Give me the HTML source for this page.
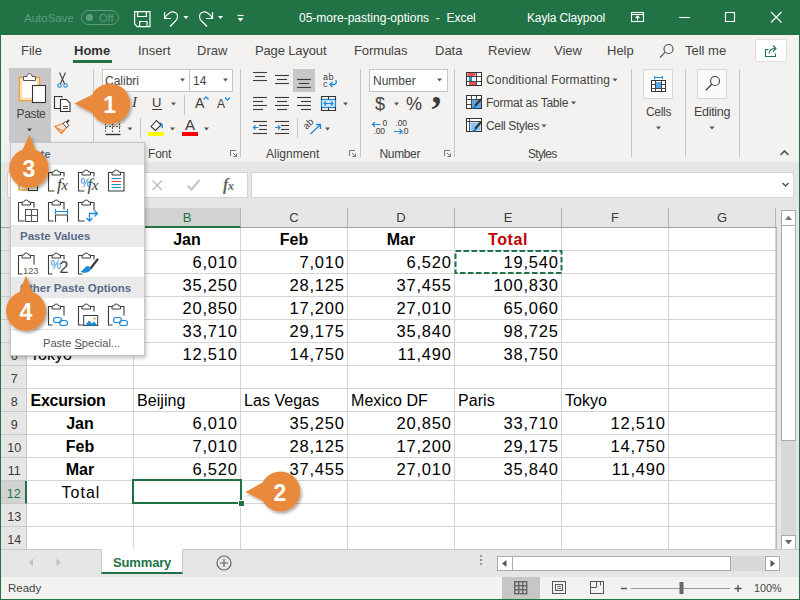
<!DOCTYPE html>
<html>
<head>
<meta charset="utf-8">
<title>Excel</title>
<style>
html,body{margin:0;padding:0;}
body{width:800px;height:600px;overflow:hidden;position:relative;background:#fff;font-family:"Liberation Sans",sans-serif;font-size:12px;color:#444;}
.abs,#app *{position:absolute;box-sizing:border-box;}
#app{position:absolute;left:0;top:0;width:800px;height:600px;overflow:hidden;}
.t{white-space:nowrap;line-height:1;}
#title{left:0;top:0;width:800px;height:35px;background:#217346;}
#title .t{color:#fff;font-size:12px;}
#tabs{left:1px;top:35px;width:798px;height:30px;background:#f3f2f1;}
#tabs .t{font-size:13px;color:#444;top:9px;}
#ribbon{left:0px;top:65px;width:800px;height:97px;background:#f3f2f1;box-shadow:0 1px 2px rgba(0,0,0,0.18);}
.sep{width:1px;background:#c8c6c4;top:69px;height:88px;}
.ssep{width:1px;background:#c8c6c4;height:20px;}
.ibox{top:69px;width:30px;height:30px;background:#fafafa;border:1px solid #d8d8d8;}
.gl{font-size:12px;color:#444;top:147.500px;}
.lbl{font-size:12px;color:#444;}
.combo{background:#fff;border:1px solid #c6c6c6;height:23px;top:69px;}
#below{left:1px;top:162px;width:798px;height:46px;background:#e6e6e6;}
.fbox{background:#fff;border:1px solid #d4d4d4;top:10px;height:26px;}
#grid{left:1px;top:208px;width:776px;height:341px;background:#fff;overflow:hidden;}
.ch{top:0;height:19px;background:#e6e6e6;border-right:1px solid #b4b4b4;color:#3a3a3a;font-size:13px;text-align:center;line-height:20px;}
.rh{left:0;width:26px;background:#e6e6e6;border-bottom:1px solid #c9c9c9;color:#3a3a3a;font-size:12.500px;text-align:center;}
.vl{top:20px;width:1px;height:330px;background:#d4d4d4;}
.hl{left:26px;height:1px;width:750px;background:#d4d4d4;}
.c{font-size:16.5px;color:#000;white-space:nowrap;line-height:1;letter-spacing:0.8px;margin-right:-0.8px;}
.b{font-weight:bold;font-size:16px;letter-spacing:0px;margin-top:1px;margin-right:0;}
.tx{font-size:16px;letter-spacing:0.05px;margin-top:1px;margin-left:1px;margin-right:0;}
.dg{font-size:8.500px;color:#3b3b3b;letter-spacing:-0.2px;}
.mb{font-size:11.5px;font-weight:bold;color:#5a6a8c;}
#sheetbar{left:1px;top:549px;width:798px;height:28px;background:#e6e6e6;}
#status{left:1px;top:577px;width:798px;height:22px;background:#f3f2f1;}
#frame-l{left:0;top:35px;width:1px;height:565px;background:#217346;}
#frame-r{left:799px;top:35px;width:1px;height:565px;background:#217346;}
#frame-b{left:0;top:599px;width:800px;height:1px;background:#217346;}
</style>
</head>
<body>
<div id="app">
<div id="title">
<div class="t" style="left:24px;top:12.500px;color:#5f9e7c;font-size:11.5px;">AutoSave</div>
<div style="left:81px;top:10px;width:38px;height:15px;border:1px solid #5f9e7c;border-radius:8px;"></div>
<div style="left:86px;top:14px;width:7px;height:7px;border-radius:4px;background:#5f9e7c;"></div>
<div class="t" style="left:99px;top:13px;color:#5f9e7c;font-size:11px;">Off</div>
<svg style="left:130px;top:5px;" width="120" height="26" viewBox="130 5 120 26" fill="none" stroke="#fff" stroke-width="1.200">
<path d="M134.600 11.600h15.400v15h-12.800l-2.600-2.600z"/><path d="M137.600 11.600v4.900h8.800v-4.900"/><path d="M139.600 26.600v-5.100h7.400v5.100"/>
<path d="M164.600 12v6.500h6.400"/><path d="M164.800 18.300C167 13.500 171.500 10.800 175.200 12.500C178.500 14.200 178.200 18.300 175.500 21L170 26.500"/>
<path d="M212.500 12v6.500h-6.400"/><path d="M212.300 18.300C210.100 13.500 205.600 10.800 201.900 12.500C198.600 14.200 198.900 18.300 201.600 21L207.100 26.500"/>
<path d="M183.400 16h5l-2.500 3z" fill="#fff" stroke="none"/>
<path d="M218 16h5l-2.500 3z" fill="#fff" stroke="none"/>
<path d="M237.500 15.500h6"/><path d="M237.500 18h6l-3 3.500z" fill="#fff" stroke="none"/>
</svg>
<div class="t" style="left:299px;top:12px;">05-more-pasting-options&nbsp; -&nbsp; Excel</div>
<div class="t" style="left:527px;top:12px;letter-spacing:-0.15px;">Kayla Claypool</div>
<svg style="left:625px;top:6px;" width="170" height="24" viewBox="0 0 170 24" fill="none" stroke="#fff" stroke-width="1.1">
<rect x="6.500" y="6.500" width="12" height="9"/><path d="M6.500 8.500h12" /><path d="M12.500 14.500v-4.500M10.500 12l2-2l2 2"/>
<path d="M54 11.500h11"/>
<rect x="100.500" y="6.500" width="9" height="9"/>
<path d="M146 6l10.500 10.500M156.500 6l-10.500 10.500"/>
</svg>
</div>
<div id="tabs">
<div class="t" style="left:20px;">File</div>
<div class="t" style="left:73px;font-weight:bold;color:#333;">Home</div>
<div style="left:72px;top:25px;width:39px;height:3px;background:#217346;"></div>
<div class="t" style="left:137px;">Insert</div>
<div class="t" style="left:196px;">Draw</div>
<div class="t" style="left:254px;letter-spacing:-0.15px;">Page Layout</div>
<div class="t" style="left:353px;letter-spacing:-0.1px;">Formulas</div>
<div class="t" style="left:434px;">Data</div>
<div class="t" style="left:487px;">Review</div>
<div class="t" style="left:553px;">View</div>
<div class="t" style="left:606px;">Help</div>
<svg style="left:657px;top:7px;" width="18" height="18" viewBox="0 0 18 18" fill="none" stroke="#555" stroke-width="1.2"><circle cx="10.500" cy="7" r="4.500"/><path d="M7.300 10.200L2 15.500"/></svg>
<div class="t" style="left:684px;">Tell me</div>
<div style="left:754px;top:4px;width:32px;height:23px;background:#fff;border:1px solid #e1dfdd;border-radius:2px;"></div>
<svg style="left:762px;top:8px;" width="16" height="16" viewBox="0 0 16 16" fill="none" stroke="#217346" stroke-width="1.1"><path d="M5.500 6.500h-3v7h10v-3"/><path d="M6 10.500c0.500-3.500 3-5 6.500-5"/><path d="M10 2.500l3 3l-3 3"/></svg>
</div>
<div id="ribbon"></div>
<div id="rib" style="left:0;top:0;width:800px;height:162px;">
<div style="left:9px;top:68px;width:42px;height:74px;background:#c8c8c8;"></div>
<div style="left:293px;top:69px;width:22px;height:23px;background:#c8c8c8;"></div>
<div class="sep" style="left:93px;"></div><div class="sep" style="left:240px;"></div><div class="sep" style="left:360px;"></div><div class="sep" style="left:454px;"></div><div class="sep" style="left:631px;"></div><div class="sep" style="left:685px;"></div><div class="sep" style="left:739px;"></div>
<div class="ssep" style="left:184px;top:95px;"></div><div class="ssep" style="left:140px;top:118px;"></div><div class="ssep" style="left:297px;top:118px;"></div>
<div class="combo" style="left:102px;width:88px;"></div><div class="combo" style="left:189px;width:44px;"></div><div class="combo" style="left:369px;width:79px;"></div>
<div class="ibox" style="left:643px;"></div><div class="ibox" style="left:697px;"></div>
<div class="t lbl" style="left:16.500px;top:107.800px;letter-spacing:-0.35px;font-size:12px;">Paste</div>
<div class="t lbl" style="left:105px;top:75px;">Calibri</div>
<div class="t lbl" style="left:193px;top:75px;">14</div>
<div class="t lbl" style="left:373px;top:75px;">Number</div>
<div class="t" style="left:132px;top:95px;font-family:'Liberation Serif',serif;font-style:italic;font-size:15px;color:#3b3b3b;">I</div>
<div class="t" style="left:152px;top:96px;font-size:13px;color:#3b3b3b;">U</div>
<div style="left:152px;top:109px;width:10px;height:1px;background:#3b3b3b;"></div>
<div class="t" style="left:195px;top:96px;font-size:14px;color:#3b3b3b;">A</div>
<div class="t" style="left:217px;top:98px;font-size:12px;color:#3b3b3b;">A</div>
<div class="t" style="left:185px;top:117px;font-size:15px;color:#3b3b3b;">A</div>
<div style="left:182px;top:132px;width:16px;height:4px;background:#f00;"></div>
<div style="left:148px;top:132px;width:16px;height:4px;background:#ff0;"></div>
<div class="t" style="left:375px;top:95px;font-size:18px;color:#444;">$</div>
<div class="t" style="left:406px;top:95px;font-size:18px;color:#3b3b3b;letter-spacing:-1px;">%</div>
<div class="t" style="left:429.500px;top:90px;font-size:40px;color:#3b3b3b;font-family:'Liberation Serif',serif;font-weight:bold;">’</div>
<div class="t lbl" style="left:486px;top:74px;letter-spacing:0.15px;">Conditional Formatting</div>
<div class="t lbl" style="left:486px;top:97px;letter-spacing:-0.25px;">Format as Table</div>
<div class="t lbl" style="left:486px;top:120px;letter-spacing:-0.33px;">Cell Styles</div>
<div class="t lbl" style="left:646px;top:106px;letter-spacing:-0.3px;font-size:12px;">Cells</div>
<div class="t lbl" style="left:694px;top:106px;letter-spacing:-0.3px;font-size:12.5px;">Editing</div>
<div class="t" style="left:323px;top:73px;font-size:9px;color:#3b3b3b;letter-spacing:0.4px;">ab</div>
<div class="t" style="left:323px;top:80px;font-size:9px;color:#3b3b3b;">c</div>
<div class="t" style="left:303px;top:119px;font-size:9.500px;color:#3b3b3b;transform:rotate(-45deg);transform-origin:50% 50%;">ab</div>
<div class="t dg" style="left:382.500px;top:119px;">0</div>
<div class="t dg" style="left:373.500px;top:127px;">.00</div>
<div class="t dg" style="left:395.500px;top:119px;">.00</div>
<div class="t dg" style="left:401.500px;top:127px;">.0</div>
<div class="t gl" style="left:148px;letter-spacing:-0.2px;">Font</div>
<div class="t gl" style="left:266px;">Alignment</div>
<div class="t gl" style="left:379.500px;letter-spacing:-0.35px;">Number</div>
<div class="t gl" style="left:528px;letter-spacing:-0.7px;">Styles</div>
<svg id="ribsvg" style="left:0;top:65px;" width="800" height="97" viewBox="0 65 800 97" fill="none" stroke="#3b3b3b" stroke-width="1.1">
<rect x="19.500" y="77.500" width="20" height="23" fill="#fff" stroke="#f0a030" stroke-width="1.600"/>
<rect x="21.500" y="79.500" width="16" height="19" fill="#fff" stroke="#fbdcae" stroke-width="1.400"/>
<path d="M23.500 80.500v-4h3.500c0-4 5-4 5 0h3.500v4z" fill="#fff" stroke="#555" stroke-width="1"/>
<rect x="32.500" y="85.500" width="13" height="17" fill="#fff" stroke="#333" stroke-width="1.100"/>
<path d="M27 128.5h5l-2.500 3z" fill="#444" stroke="none"/>
<path d="M59.500 72.500l5.200 11.500M65.500 72.500l-5.200 11.500" stroke="#444" stroke-width="1.100"/>
<circle cx="59.500" cy="85.500" r="1.800" stroke="#1e8bd8" stroke-width="1.100"/><circle cx="65.500" cy="85.500" r="1.800" stroke="#1e8bd8" stroke-width="1.100"/>
<path d="M60.500 108.500h-6v-12h7l1 1" stroke="#333" />
<path d="M60.500 99.500h6l3.500 3.500v8.500h-9.500z" fill="#fff" stroke="#333"/>
<path d="M63 106.500h5M63 108.500h5" stroke="#333" stroke-width="0.900"/>
<path d="M55 126.500l9 -3.500l3 4l-5.500 6.500z" fill="#fbe3cd" stroke="#e8833a" stroke-width="1.200"/>
<path d="M57 128l6 3" stroke="#e8833a" stroke-width="1"/>
<path d="M63 123.500l2.500-2l3.500 4l-2.500 2z" fill="#fff" stroke="#444" stroke-width="1"/>
<path d="M66.500 122.500l2.500-2.500" stroke="#444" stroke-width="1.800"/>
<path d="M180 78.5h5l-2.500 3z" fill="#555" stroke="none"/>
<path d="M223 78.5h5l-2.500 3z" fill="#555" stroke="none"/>
<path d="M437 78.5h5l-2.500 3z" fill="#555" stroke="none"/>
<path d="M171 102.5h5l-2.500 3z" fill="#555" stroke="none"/>
<path d="M127.5 127.5h5l-2.500 3z" fill="#555" stroke="none"/>
<path d="M170 127.5h5l-2.500 3z" fill="#555" stroke="none"/>
<path d="M204 127.5h5l-2.500 3z" fill="#555" stroke="none"/>
<path d="M203.500 99.500l2.500-2.500l2.500 2.500" stroke="#1e8bd8" stroke-width="1.300"/>
<path d="M225 97.500l2.500 2.500l2.500-2.500" stroke="#1e8bd8" stroke-width="1.300"/>
<path d="M105.500 134.500h15" stroke="#333" stroke-width="1.400"/>
<path d="M105.500 120v12M112.500 120v12M119.500 120v12M105.500 126.500h15" stroke="#555" stroke-width="1" stroke-dasharray="2 1.500"/>
<path d="M151 126.500l5.500-6l4.500 4.500l-5.500 5.500z" fill="#fff" stroke="#333" stroke-width="1.100"/>
<path d="M160 123c2 0.500 2.500 2.500 2 5" stroke="#1e8bd8" stroke-width="1.600"/>
<path d="M253 72.5h14" stroke="#3b3b3b" stroke-width="1.1"/>
<path d="M255 76.5h10" stroke="#3b3b3b" stroke-width="1.1"/>
<path d="M253 80.5h14" stroke="#3b3b3b" stroke-width="1.1"/>
<path d="M275 75.5h14" stroke="#3b3b3b" stroke-width="1.1"/>
<path d="M277 79.5h10" stroke="#3b3b3b" stroke-width="1.1"/>
<path d="M275 83.5h14" stroke="#3b3b3b" stroke-width="1.1"/>
<path d="M297 79.5h14" stroke="#3b3b3b" stroke-width="1.1"/>
<path d="M299 83.5h10" stroke="#3b3b3b" stroke-width="1.1"/>
<path d="M297 87.5h14" stroke="#3b3b3b" stroke-width="1.1"/>
<path d="M335.500 80c2 2 0.500 4.500-2 4.500h-3.500" stroke="#1e8bd8" stroke-width="1.300"/><path d="M332.500 82l-2.500 2.500l2.500 2.500" stroke="#1e8bd8" stroke-width="1.300"/>
<path d="M253 97.5h14" stroke="#3b3b3b" stroke-width="1.1"/>
<path d="M253 101.5h10" stroke="#3b3b3b" stroke-width="1.1"/>
<path d="M253 105.5h14" stroke="#3b3b3b" stroke-width="1.1"/>
<path d="M253 109.5h10" stroke="#3b3b3b" stroke-width="1.1"/>
<path d="M275 97.5h14" stroke="#3b3b3b" stroke-width="1.1"/>
<path d="M277 101.5h10" stroke="#3b3b3b" stroke-width="1.1"/>
<path d="M275 105.5h14" stroke="#3b3b3b" stroke-width="1.1"/>
<path d="M277 109.5h10" stroke="#3b3b3b" stroke-width="1.1"/>
<path d="M297 97.5h14" stroke="#3b3b3b" stroke-width="1.1"/>
<path d="M301 101.5h10" stroke="#3b3b3b" stroke-width="1.1"/>
<path d="M297 105.5h14" stroke="#3b3b3b" stroke-width="1.1"/>
<path d="M301 109.5h10" stroke="#3b3b3b" stroke-width="1.1"/>
<rect x="321.500" y="99.500" width="14" height="8" fill="#cfe4f7" stroke="#1e8bd8" stroke-width="1.200"/>
<path d="M321.500 96.500h14.500M321.500 110.500h14.500M321.500 96v4M335.500 96v4M328.500 96v3.500M321.500 107v4M335.500 107v4M328.500 107.500v3.500" stroke="#333" stroke-width="1.100"/>
<path d="M324 103.500h9M326 101.500l-2 2l2 2M331 101.500l2 2l-2 2" stroke="#1e8bd8" stroke-width="1.100"/>
<path d="M343 102.5h5l-2.500 3z" fill="#555" stroke="none"/>
<path d="M253 121.5h14" stroke="#3b3b3b" stroke-width="1.1"/>
<path d="M259 125.5h8" stroke="#3b3b3b" stroke-width="1.1"/>
<path d="M259 129.5h8" stroke="#3b3b3b" stroke-width="1.1"/>
<path d="M253 133.5h14" stroke="#3b3b3b" stroke-width="1.1"/>
<path d="M253.500 127.500h5M255.500 125.500l-2 2l2 2" stroke="#1e8bd8" stroke-width="1.200"/>
<path d="M275 121.5h14" stroke="#3b3b3b" stroke-width="1.1"/>
<path d="M281 125.5h8" stroke="#3b3b3b" stroke-width="1.1"/>
<path d="M281 129.5h8" stroke="#3b3b3b" stroke-width="1.1"/>
<path d="M275 133.5h14" stroke="#3b3b3b" stroke-width="1.1"/>
<path d="M275 127.500h5M278 125.500l2 2l-2 2" stroke="#1e8bd8" stroke-width="1.200"/>
<path d="M310.500 134l10-9.500M316 124.500h4.500v4.500" stroke="#1e8bd8" stroke-width="1.300"/>
<path d="M325 127.5h5l-2.500 3z" fill="#555" stroke="none"/>
<path d="M230.5 156v-5.500h5.500" stroke="#777" stroke-width="1"/><path d="M233 153l3.500 3.500M236.5 153.500v3h-3" stroke="#777" stroke-width="1"/>
<path d="M349.5 156v-5.500h5.500" stroke="#777" stroke-width="1"/><path d="M352 153l3.500 3.500M355.5 153.500v3h-3" stroke="#777" stroke-width="1"/>
<path d="M444.5 156v-5.500h5.500" stroke="#777" stroke-width="1"/><path d="M447 153l3.500 3.500M450.5 153.500v3h-3" stroke="#777" stroke-width="1"/>
<path d="M394 102.5h5l-2.500 3z" fill="#555" stroke="none"/>
<path d="M372.500 124.500h8M375 122l-2.500 2.500l2.500 2.500" stroke="#1e8bd8" stroke-width="1.200"/>
<path d="M394 131.500h8M399.500 129l2.500 2.500l-2.500 2.500" stroke="#1e8bd8" stroke-width="1.200"/>
<rect x="466.5" y="72.5" width="15" height="13" fill="#fff" stroke="#333" stroke-width="1"/>
<path d="M466.5 76.5h15M466.5 81.5h15M471.5 72.5v13M476.5 72.5v13" stroke="#333" stroke-width="0.900"/>
<rect x="467.5" y="73" width="8" height="3" fill="#e8505a" stroke="none"/><rect x="469" y="77" width="3" height="4" fill="#1e8bd8" stroke="none"/><rect x="469" y="82" width="7" height="3" fill="#e8505a" stroke="none"/>
<rect x="466.5" y="95.5" width="15" height="13" fill="#fff" stroke="#333" stroke-width="1"/>
<path d="M466.5 99.5h15M466.5 104.5h15M471.5 95.5v13M476.5 95.5v13" stroke="#333" stroke-width="0.900"/>
<rect x="472" y="100" width="9" height="8" fill="#5aa7e6" stroke="none"/>
<path d="M481 99l-6 7" stroke="#333" stroke-width="2.200"/><path d="M475.5 105.5c-1.500 0-2 2-4 2.500c2 1 4.500 0.500 5.500-1.500z" fill="#1e8bd8" stroke="none"/>
<rect x="466.5" y="118.5" width="15" height="13" fill="#fff" stroke="#333" stroke-width="1"/>
<path d="M466.5 121.5h15M469.5 118.5v13" stroke="#333" stroke-width="0.900"/>
<rect x="470.5" y="122.5" width="10" height="8" fill="#8cc2ee" stroke="none"/>
<path d="M481 122l-6 7" stroke="#333" stroke-width="2.200"/><path d="M475.5 128.5c-1.500 0-2 2-4 2.500c2 1 4.500 0.500 5.500-1.500z" fill="#1e8bd8" stroke="none"/>
<path d="M612.5 78.5h5l-2.500 3z" fill="#555" stroke="none"/>
<path d="M571 101.5h5l-2.500 3z" fill="#555" stroke="none"/>
<path d="M541.5 124.5h5l-2.500 3z" fill="#555" stroke="none"/>
<rect x="651.5" y="80.5" width="14" height="11" fill="#fff" stroke="#333" stroke-width="1"/>
<path d="M651.5 84.5h14M651.5 88.5h14M655.5 80.5v11M661.5 80.5v11" stroke="#333" stroke-width="0.900"/>
<rect x="656" y="82" width="5" height="6" fill="#5aa7e6" stroke="none"/>
<path d="M654.5 77.5h8M654.5 76v3M662.5 76v3" stroke="#1e8bd8" stroke-width="1"/>
<path d="M656 126.5h5l-2.500 3z" fill="#555" stroke="none"/>
<path d="M709.5 126.5h5l-2.500 3z" fill="#555" stroke="none"/>
<circle cx="715" cy="81" r="4.500" stroke="#444" stroke-width="1.200"/><path d="M711.800 84.200l-6 6" stroke="#444" stroke-width="1.300"/>
<path d="M780.500 155l4-4l4 4" stroke="#555" stroke-width="1.600"/>
</svg>
</div>
<div id="below"></div>
<div id="fb" style="left:0;top:0;width:800px;height:210px;">
<div class="fbox" style="left:7px;top:172px;width:126px;"></div>
<div class="fbox" style="left:143px;top:172px;width:105px;"></div>
<div class="fbox" style="left:251px;top:172px;width:543px;"></div>
<svg style="left:140px;top:172px;" width="110" height="26" viewBox="140 172 110 26" fill="none" stroke="#bcbcbc" stroke-width="1.400"><path d="M152.500 180.500l9.500 9.500M162 180.500l-9.500 9.500"/><path d="M187.500 185.500l4 4l8-9.500" stroke-width="2.200" stroke="#c6c6c6"/></svg>
<div class="t" style="left:223px;top:177px;font-family:'Liberation Serif',serif;font-style:italic;font-weight:bold;font-size:16px;color:#666;letter-spacing:-0.5px;">f<span style="font-size:12.500px;position:static;">x</span></div>
<svg style="left:778.500px;top:179.500px;" width="14" height="10" viewBox="0 0 14 10" fill="none" stroke="#555" stroke-width="1.500"><path d="M3.500 3l3 3l3-3"/></svg>
</div>
<div id="grid">
<div style="left:0;top:0;width:776px;height:20px;background:#e6e6e6;border-bottom:1px solid #a0a0a0;"></div>
<div class="ch" style="left:26px;width:107px;">A</div>
<div class="ch" style="left:133px;width:107px;background:#d2d2d2;color:#217346;border-bottom:2px solid #217346;height:20px;line-height:19px;">B</div>
<div class="ch" style="left:240px;width:107px;">C</div>
<div class="ch" style="left:347px;width:107px;">D</div>
<div class="ch" style="left:454px;width:107px;">E</div>
<div class="ch" style="left:561px;width:107px;">F</div>
<div class="ch" style="left:668px;width:107px;">G</div>
<div class="ch" style="left:0;width:26px;"></div>
<svg style="left:10px;top:5px;" width="13" height="12" viewBox="0 0 13 12"><path d="M12 0v12h-12z" fill="#b7b7b7"/></svg>
<div class="rh" style="top:20px;height:23px;line-height:26.500px;padding-left:1.500px;border-right:1px solid #c9c9c9;">1</div>
<div class="rh" style="top:43px;height:23px;line-height:26.500px;padding-left:1.500px;border-right:1px solid #c9c9c9;">2</div>
<div class="rh" style="top:66px;height:23px;line-height:26.500px;padding-left:1.500px;border-right:1px solid #c9c9c9;">3</div>
<div class="rh" style="top:89px;height:23px;line-height:26.500px;padding-left:1.500px;border-right:1px solid #c9c9c9;">4</div>
<div class="rh" style="top:112px;height:23px;line-height:26.500px;padding-left:1.500px;border-right:1px solid #c9c9c9;">5</div>
<div class="rh" style="top:135px;height:23px;line-height:26.500px;padding-left:1.500px;border-right:1px solid #c9c9c9;">6</div>
<div class="rh" style="top:158px;height:23px;line-height:26.500px;padding-left:1.500px;border-right:1px solid #c9c9c9;">7</div>
<div class="rh" style="top:181px;height:23px;line-height:26.500px;padding-left:1.500px;border-right:1px solid #c9c9c9;">8</div>
<div class="rh" style="top:204px;height:23px;line-height:26.500px;padding-left:1.500px;border-right:1px solid #c9c9c9;">9</div>
<div class="rh" style="top:227px;height:23px;line-height:26.500px;padding-left:1.500px;border-right:1px solid #c9c9c9;">10</div>
<div class="rh" style="top:250px;height:23px;line-height:26.500px;padding-left:1.500px;border-right:1px solid #c9c9c9;">11</div>
<div class="rh" style="top:273px;height:23px;line-height:26.500px;padding-left:1.500px;background:#d2d2d2;color:#217346;border-right:2px solid #217346;">12</div>
<div class="rh" style="top:296px;height:23px;line-height:26.500px;padding-left:1.500px;border-right:1px solid #c9c9c9;">13</div>
<div class="rh" style="top:319px;height:23px;line-height:26.500px;padding-left:1.500px;border-right:1px solid #c9c9c9;">14</div>
<div class="vl" style="left:132px;"></div>
<div class="vl" style="left:239px;"></div>
<div class="vl" style="left:346px;"></div>
<div class="vl" style="left:453px;"></div>
<div class="vl" style="left:560px;"></div>
<div class="vl" style="left:667px;"></div>
<div class="vl" style="left:774px;"></div>
<div class="hl" style="top:42px;"></div>
<div class="hl" style="top:65px;"></div>
<div class="hl" style="top:88px;"></div>
<div class="hl" style="top:111px;"></div>
<div class="hl" style="top:134px;"></div>
<div class="hl" style="top:157px;"></div>
<div class="hl" style="top:180px;"></div>
<div class="hl" style="top:203px;"></div>
<div class="hl" style="top:226px;"></div>
<div class="hl" style="top:249px;"></div>
<div class="hl" style="top:272px;"></div>
<div class="hl" style="top:295px;"></div>
<div class="hl" style="top:318px;"></div>
<div class="hl" style="top:341px;"></div>
<div style="left:775px;top:20px;width:1px;height:321px;background:#b8b8b8;"></div>
<div class="c b" style="top:23px;left:29.5px;letter-spacing:-0.25px;">Excursion</div>
<div class="c b" style="top:23px;left:133px;width:106px;text-align:center;">Jan</div>
<div class="c b" style="top:23px;left:240px;width:106px;text-align:center;">Feb</div>
<div class="c b" style="top:23px;left:347px;width:106px;text-align:center;">Mar</div>
<div class="c b" style="top:23px;left:454px;width:106px;text-align:center;color:#c00000;letter-spacing:0.6px;">Total</div>
<div class="c tx" style="top:46px;left:28px;">Beijing</div>
<div class="c" style="top:46px;right:540px;">6,010</div>
<div class="c" style="top:46px;right:433px;">7,010</div>
<div class="c" style="top:46px;right:326px;">6,520</div>
<div class="c" style="top:46px;right:219px;">19,540</div>
<div class="c tx" style="top:69px;left:28px;">Las Vegas</div>
<div class="c" style="top:69px;right:540px;">35,250</div>
<div class="c" style="top:69px;right:433px;">28,125</div>
<div class="c" style="top:69px;right:326px;">37,455</div>
<div class="c" style="top:69px;right:219px;">100,830</div>
<div class="c tx" style="top:92px;left:28px;">Mexico DF</div>
<div class="c" style="top:92px;right:540px;">20,850</div>
<div class="c" style="top:92px;right:433px;">17,200</div>
<div class="c" style="top:92px;right:326px;">27,010</div>
<div class="c" style="top:92px;right:219px;">65,060</div>
<div class="c tx" style="top:115px;left:28px;">Paris</div>
<div class="c" style="top:115px;right:540px;">33,710</div>
<div class="c" style="top:115px;right:433px;">29,175</div>
<div class="c" style="top:115px;right:326px;">35,840</div>
<div class="c" style="top:115px;right:219px;">98,725</div>
<div class="c tx" style="top:138px;left:28px;">Tokyo</div>
<div class="c" style="top:138px;right:540px;">12,510</div>
<div class="c" style="top:138px;right:433px;">14,750</div>
<div class="c" style="top:138px;right:326px;">11,490</div>
<div class="c" style="top:138px;right:219px;">38,750</div>
<div class="c b" style="top:184px;left:29.5px;letter-spacing:-0.25px;">Excursion</div>
<div class="c tx" style="top:184px;left:135px;">Beijing</div>
<div class="c tx" style="top:184px;left:242px;">Las Vegas</div>
<div class="c tx" style="top:184px;left:349px;">Mexico DF</div>
<div class="c tx" style="top:184px;left:456px;">Paris</div>
<div class="c tx" style="top:184px;left:563px;">Tokyo</div>
<div class="c b" style="top:207px;left:26px;width:106px;text-align:center;">Jan</div>
<div class="c" style="top:207px;right:540px;">6,010</div>
<div class="c" style="top:207px;right:433px;">35,250</div>
<div class="c" style="top:207px;right:326px;">20,850</div>
<div class="c" style="top:207px;right:219px;">33,710</div>
<div class="c" style="top:207px;right:112px;">12,510</div>
<div class="c b" style="top:230px;left:26px;width:106px;text-align:center;">Feb</div>
<div class="c" style="top:230px;right:540px;">7,010</div>
<div class="c" style="top:230px;right:433px;">28,125</div>
<div class="c" style="top:230px;right:326px;">17,200</div>
<div class="c" style="top:230px;right:219px;">29,175</div>
<div class="c" style="top:230px;right:112px;">14,750</div>
<div class="c b" style="top:253px;left:26px;width:106px;text-align:center;">Mar</div>
<div class="c" style="top:253px;right:540px;">6,520</div>
<div class="c" style="top:253px;right:433px;">37,455</div>
<div class="c" style="top:253px;right:326px;">27,010</div>
<div class="c" style="top:253px;right:219px;">35,840</div>
<div class="c" style="top:253px;right:112px;">11,490</div>
<div class="c tx" style="top:276px;left:26px;width:106px;text-align:center;letter-spacing:1px;">Total</div>
<svg style="left:452px;top:41px;" width="112" height="27" viewBox="0 0 112 27" fill="none"><rect x="2.500" y="2" width="106" height="22" stroke="#217346" stroke-width="2" stroke-dasharray="5.500 2.500"/></svg>
<div style="left:131px;top:271px;width:110px;height:25px;border:2px solid #217346;"></div>
<div style="left:237px;top:292px;width:7px;height:7px;background:#217346;border:1px solid #fff;"></div>
</div>
<div id="vscroll" style="left:777px;top:208px;width:22px;height:341px;background:#e6e6e6;">
<div style="left:4px;top:2px;width:15px;height:339px;background:#d8d8d8;"></div>
<div style="left:4px;top:2px;width:15px;height:16px;background:#fff;border:1px solid #ababab;"></div>
<div style="left:4px;top:17px;width:15px;height:216px;background:#fff;border:1px solid #ababab;"></div>
<div style="left:4px;top:327px;width:15px;height:15px;background:#fff;border:1px solid #ababab;"></div>
<svg style="left:4px;top:0;" width="15" height="341" viewBox="0 0 15 341"><path d="M4 12h7l-3.500-4.500z" fill="#777"/><path d="M4 332h7l-3.500 4.500z" fill="#666"/></svg>
</div>
<div id="sheetbar">
<div style="left:0;top:0;width:798px;height:1px;background:#c9c9c9;"></div>
<svg style="left:20px;top:7px;" width="50" height="14" viewBox="0 0 50 14"><path d="M12 2.500v8l-4.500-4z" fill="#c2c2c2"/><path d="M35.500 2.500v8l4.500-4z" fill="#c2c2c2"/></svg>
<div style="left:100px;top:0px;width:82px;height:25px;background:#fff;border-right:1px solid #c9c9c9;border-left:1px solid #c9c9c9;border-bottom:2px solid #217346;"></div>
<div class="t" style="left:112px;top:7px;font-size:13px;font-weight:bold;color:#217346;letter-spacing:-0.15px;">Summary</div>
<svg style="left:214px;top:5px;" width="18" height="18" viewBox="0 0 18 18" fill="none" stroke="#666" stroke-width="1.200"><circle cx="9" cy="9" r="7"/><path d="M9 5v8M5 9h8"/></svg>
<div style="left:479px;top:6px;width:2px;height:2px;background:#999;box-shadow:0 4px 0 #999,0 8px 0 #999;"></div>
<div style="left:496px;top:7px;width:283px;height:15px;background:#d8d8d8;"></div>
<div style="left:496px;top:7px;width:16px;height:15px;background:#fff;border:1px solid #ababab;"></div>
<div style="left:511px;top:7px;width:219px;height:15px;background:#fff;border:1px solid #ababab;"></div>
<div style="left:764px;top:7px;width:15px;height:15px;background:#fff;border:1px solid #ababab;"></div>
<svg style="left:496px;top:7px;" width="284" height="15" viewBox="0 0 284 15"><path d="M9.500 4v7l-4.500-3.500z" fill="#555"/><path d="M273.500 4v7l4.500-3.500z" fill="#555"/></svg>
</div>
<div id="status">
<div class="t" style="left:7px;top:6px;font-size:11.5px;color:#444;">Ready</div>
<div style="left:501px;top:0;width:38px;height:22px;background:#c6c6c6;"></div>
<svg style="left:500px;top:0;" width="298" height="22" viewBox="501 577 298 22" fill="none" stroke="#555" stroke-width="1">
<g stroke="#666" stroke-width="1.400"><rect x="514.700" y="581.700" width="12" height="12"/><path d="M514.700 585.700h12M514.700 589.700h12M518.700 581.700v12M522.700 581.700v12"/></g>
<rect x="552.500" y="581.500" width="13" height="12"/><rect x="555.500" y="584.500" width="7" height="6"/><path d="M557 586.500h4M557 588.500h4" stroke-width="0.800"/>
<rect x="590.500" y="581.500" width="13" height="12"/><path d="M596.500 581.500v6M590.500 587.500h6M600.500 581.500v4" />
<path d="M621 588.500h6M734.500 588.500h7M738 585v7" stroke-width="1.400"/><path d="M631 588.500h99" stroke="#999"/>
<rect x="679.500" y="582" width="4" height="12" fill="#666" stroke="none"/>
</svg>
<div class="t" style="left:753px;top:5.500px;font-size:10.800px;color:#444;">100%</div>
</div>
<div id="menu" style="left:10px;top:142px;width:135px;height:214px;background:#fff;border:1px solid #c6c6c6;box-shadow:1px 2px 4px rgba(0,0,0,0.25);"></div>
<div id="menuc" style="left:0;top:0;width:300px;height:360px;">
<div style="left:11px;top:143px;width:133px;height:22px;background:#eaeaea;"></div>
<div style="left:11px;top:225px;width:133px;height:22px;background:#eaeaea;"></div>
<div style="left:11px;top:277px;width:133px;height:21px;background:#eaeaea;"></div>
<div class="t mb" style="left:20px;top:149px;">Paste</div>
<div class="t mb" style="left:20px;top:231px;">Paste Values</div>
<div class="t mb" style="left:20px;top:283px;">Other Paste Options</div>
<div style="left:11px;top:329px;width:133px;height:1px;background:#e1e1e1;"></div>
<div class="t" style="left:43px;top:337.500px;font-size:11.100px;color:#555;">Paste <span style="position:static;text-decoration:underline;">S</span>pecial...</div>
<div class="t" style="left:57px;top:175.500px;font-size:17px;font-family:'Liberation Serif',serif;font-style:italic;color:#3b3b3b;letter-spacing:-0.5px;">f<span style="position:static;font-size:15px;">x</span></div>
<div class="t" style="left:87.500px;top:175.500px;font-size:17px;font-family:'Liberation Serif',serif;font-style:italic;color:#3b3b3b;letter-spacing:-0.5px;">f<span style="position:static;font-size:15px;">x</span></div>
<div class="t" style="left:80.500px;top:177px;font-size:12px;color:#1e8bd8;letter-spacing:-1px;">%</div>
<div class="t" style="left:23px;top:266.500px;font-size:9.300px;color:#555;letter-spacing:0px;">123</div>
<div class="t" style="left:50.500px;top:259px;font-size:12px;color:#1e8bd8;letter-spacing:-1px;">%</div>
<div class="t" style="left:59.500px;top:260px;font-size:16px;color:#3b3b3b;">2</div>
<svg style="left:0;top:140px;" width="160" height="220" viewBox="0 140 160 220" fill="none">
<rect x="19" y="173" width="13" height="17" fill="#fdf3e4" stroke="#f0a030" stroke-width="1.400"/><rect x="28.500" y="179.500" width="9" height="11" fill="#fff" stroke="#3b3b3b" stroke-width="1.100"/>
<path d="M52.0 172.5H48.5V191.0H54.5M60.0 172.5H64.0V176.5" stroke="#3b3b3b" stroke-width="1.100"/>
<path d="M52.0 175.0V172.0H53.8A2.500 2.500 0 0 1 58.7 172.0H60.5V175.0Z" stroke="#3b3b3b" stroke-width="1" fill="#fff"/>
<path d="M82.0 172.5H78.5V191.0H84.5M90.0 172.5H94.0V176.5" stroke="#3b3b3b" stroke-width="1.100"/>
<path d="M82.0 175.0V172.0H83.8A2.500 2.500 0 0 1 88.7 172.0H90.5V175.0Z" stroke="#3b3b3b" stroke-width="1" fill="#fff"/>
<path d="M112.0 172.5H108.5V191.0H124.0V172.5H120.0" stroke="#3b3b3b" stroke-width="1.100"/>
<path d="M112.0 175.0V172.0H113.8A2.500 2.500 0 0 1 118.7 172.0H120.5V175.0Z" stroke="#3b3b3b" stroke-width="1" fill="#fff"/>
<path d="M111.500 178.5h9.500" stroke="#1e8bd8" stroke-width="1.100"/>
<path d="M111.500 181.5h9.500" stroke="#e8383a" stroke-width="1.100"/>
<path d="M111.500 184.5h9.500" stroke="#1e8bd8" stroke-width="1.100"/>
<path d="M111.500 187.5h9.500" stroke="#1e8bd8" stroke-width="1.100"/>
<path d="M22.0 202.5H18.5V221.0H24.5M30.0 202.5H34.0V207.5" stroke="#3b3b3b" stroke-width="1.100"/>
<path d="M22.0 205.0V202.0H23.8A2.500 2.500 0 0 1 28.7 202.0H30.5V205.0Z" stroke="#3b3b3b" stroke-width="1" fill="#fff"/>
<path d="M25.500 209.500h12v12h-12zM31.500 209.500v12M25.500 215.500h12" stroke="#555" stroke-width="1.100"/>
<path d="M52.0 202.5H48.5V221.0H53.5M60.0 202.5H64.0V209.5" stroke="#3b3b3b" stroke-width="1.100"/>
<path d="M52.0 205.0V202.0H53.8A2.500 2.500 0 0 1 58.7 202.0H60.5V205.0Z" stroke="#3b3b3b" stroke-width="1" fill="#fff"/>
<path d="M55.500 211.500h12M55.500 209v5M67.500 209v5" stroke="#1e8bd8" stroke-width="1.200"/>
<path d="M55.500 222v-7h12v7" stroke="#3b3b3b" stroke-width="1.100"/>
<path d="M82.0 202.5H78.5V221.0H84.5M90.0 202.5H94.0V210.5" stroke="#3b3b3b" stroke-width="1.100"/>
<path d="M82.0 205.0V202.0H83.8A2.500 2.500 0 0 1 88.7 202.0H90.5V205.0Z" stroke="#3b3b3b" stroke-width="1" fill="#fff"/>
<path d="M89.500 221v-7.500h7.500M94.500 210.500l3 3l-3 3M86.500 218l3 3l3-3" stroke="#1e8bd8" stroke-width="1.300"/>
<path d="M22.0 255.5H18.5V274.0H22.5M30.0 255.5H34.0V264.5" stroke="#3b3b3b" stroke-width="1.100"/>
<path d="M22.0 258.0V255.0H23.8A2.500 2.500 0 0 1 28.7 255.0H30.5V258.0Z" stroke="#3b3b3b" stroke-width="1" fill="#fff"/>
<path d="M52.0 255.5H48.5V274.0H52.5M60.0 255.5H64.0V259.5" stroke="#3b3b3b" stroke-width="1.100"/>
<path d="M52.0 258.0V255.0H53.8A2.500 2.500 0 0 1 58.7 255.0H60.5V258.0Z" stroke="#3b3b3b" stroke-width="1" fill="#fff"/>
<path d="M82.0 255.5H78.5V274.0H82.5M90.0 255.5H94.0V259.5" stroke="#3b3b3b" stroke-width="1.100"/>
<path d="M82.0 258.0V255.0H83.8A2.500 2.500 0 0 1 88.7 255.0H90.5V258.0Z" stroke="#3b3b3b" stroke-width="1" fill="#fff"/>
<path d="M97.500 259.500l-7 9" stroke="#3b3b3b" stroke-width="2.200" stroke-linecap="round"/>
<path d="M88.500 266c-3.500-0.500-4 3.500-8 5.500c3.500 2.500 9.500 1.500 10.500-3z" fill="#1e8bd8" stroke="none"/>
<path d="M52.0 306.5H48.5V325.0H52.5M60.0 306.5H64.0V315.5" stroke="#3b3b3b" stroke-width="1.100"/>
<path d="M52.0 309.0V306.0H53.8A2.500 2.500 0 0 1 58.7 306.0H60.5V309.0Z" stroke="#3b3b3b" stroke-width="1" fill="#fff"/>
<path d="M82.0 306.5H78.5V325.0H83.5M90.0 306.5H94.0V311.5" stroke="#3b3b3b" stroke-width="1.100"/>
<path d="M82.0 309.0V306.0H83.8A2.500 2.500 0 0 1 88.7 306.0H90.5V309.0Z" stroke="#3b3b3b" stroke-width="1" fill="#fff"/>
<path d="M112.0 306.5H108.5V325.0H112.5M120.0 306.5H124.0V315.5" stroke="#3b3b3b" stroke-width="1.100"/>
<path d="M112.0 309.0V306.0H113.8A2.500 2.500 0 0 1 118.7 306.0H120.5V309.0Z" stroke="#3b3b3b" stroke-width="1" fill="#fff"/>
<rect x="53.5" y="317.500" width="8" height="5" rx="2.500" stroke="#1e8bd8" stroke-width="1.200"/><rect x="59.5" y="320.500" width="8" height="5" rx="2.500" stroke="#1e8bd8" stroke-width="1.200"/>
<rect x="113.5" y="317.500" width="8" height="5" rx="2.500" stroke="#1e8bd8" stroke-width="1.200"/><rect x="119.5" y="320.500" width="8" height="5" rx="2.500" stroke="#1e8bd8" stroke-width="1.200"/>
<rect x="83.700" y="315.500" width="14" height="10" fill="#fff" stroke="#3b3b3b" stroke-width="1"/>
<path d="M85 325.500l4-5l3 3l2-2l3.500 4z" fill="#1e8bd8" stroke="none"/><circle cx="94.500" cy="318.500" r="1" fill="#e8833a" stroke="none"/>
</svg>
</div>
<svg id="callouts" style="left:0;top:60px;" width="320" height="470" viewBox="0 60 320 470">
<defs><filter id="sh" x="-30%" y="-30%" width="170%" height="170%"><feDropShadow dx="1.500" dy="2" stdDeviation="1.800" flood-color="#000" flood-opacity="0.350"/></filter></defs>
<path d="M74.5 103.5L92.0 94.8A20.2 20.2 0 1 1 92.0 112.8Z" fill="#e8893b" filter="url(#sh)"/>
<text x="109.7" y="113.0" text-anchor="middle" font-family="Liberation Sans, sans-serif" font-weight="bold" font-size="23" fill="#fff">1</text>
<path d="M245.5 492L262.5 482.5A20 20 0 1 1 262.5 500.5Z" fill="#e8893b" filter="url(#sh)"/>
<text x="280" y="500.7" text-anchor="middle" font-family="Liberation Sans, sans-serif" font-weight="bold" font-size="23" fill="#fff">2</text>
<path d="M29.5 134.5L35.5 149.8A19.7 19.7 0 1 1 22.5 149.8Z" fill="#e8893b" filter="url(#sh)"/>
<text x="29" y="177.2" text-anchor="middle" font-family="Liberation Sans, sans-serif" font-weight="bold" font-size="23" fill="#fff">3</text>
<path d="M26 275.5L32.5 292.0A20 20 0 1 1 19.5 292.0Z" fill="#e8893b" filter="url(#sh)"/>
<text x="26" y="319.7" text-anchor="middle" font-family="Liberation Sans, sans-serif" font-weight="bold" font-size="23" fill="#fff">4</text>
</svg>
<div id="frame-l"></div><div id="frame-r"></div><div id="frame-b"></div>
</div>
</body>
</html>
